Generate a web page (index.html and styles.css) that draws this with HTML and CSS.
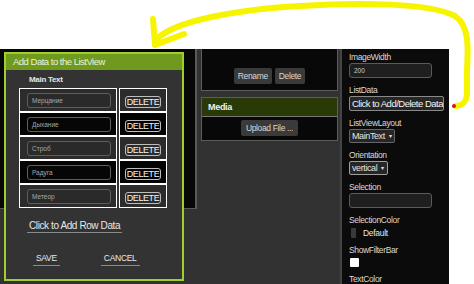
FILE: index.html
```html
<!DOCTYPE html>
<html>
<head>
<meta charset="utf-8">
<link rel="stylesheet" href="styles.css">
</head>
<body>
<div class="screen">
  <div class="topband"></div>
  <div class="app">
    <div class="viewer"><div class="viewer-panel"></div></div>
    <div class="middle">
      <div class="panel panel-top">
        <div class="btn-row"><span class="btn">Rename</span><span class="btn">Delete</span></div>
      </div>
      <div class="panel panel-media">
        <div class="panel-head">Media</div>
        <div class="panel-body"><span class="btn btn-upload">Upload File ...</span></div>
      </div>
    </div>
    <div class="props">
      <div class="prop">
        <div class="prop-label">ImageWidth</div>
        <div class="field">200</div>
      </div>
      <div class="prop">
        <div class="prop-label">ListData</div>
        <div class="prop-btn">Click to Add/Delete Data</div>
      </div>
      <div class="prop">
        <div class="prop-label">ListViewLayout</div>
        <div class="select">MainText<span class="caret">▾</span></div>
      </div>
      <div class="prop">
        <div class="prop-label">Orientation</div>
        <div class="select select-light">vertical<span class="caret">▾</span></div>
      </div>
      <div class="prop">
        <div class="prop-label">Selection</div>
        <div class="field"></div>
      </div>
      <div class="prop">
        <div class="prop-label">SelectionColor</div>
        <div class="color-row"><span class="swatch"></span><span class="color-name">Default</span></div>
      </div>
      <div class="prop">
        <div class="prop-label">ShowFilterBar</div>
        <div class="checkbox"></div>
      </div>
      <div class="prop">
        <div class="prop-label">TextColor</div>
      </div>
    </div>
  </div>

  <div class="dialog">
    <div class="dlg-title">Add Data to the ListView</div>
    <div class="dlg-body">
      <div class="dlg-label">Main Text</div>
      <table class="rows">
        <tr class="row-a"><td class="cell-text"><div class="txt">Мерцание</div></td><td class="cell-btn"><span class="del">DELETE</span></td></tr>
        <tr class="row-b"><td class="cell-text"><div class="txt">Дыхание</div></td><td class="cell-btn"><span class="del">DELETE</span></td></tr>
        <tr class="row-a"><td class="cell-text"><div class="txt">Строб</div></td><td class="cell-btn"><span class="del">DELETE</span></td></tr>
        <tr class="row-b"><td class="cell-text"><div class="txt">Радуга</div></td><td class="cell-btn"><span class="del">DELETE</span></td></tr>
        <tr class="row-a"><td class="cell-text"><div class="txt">Метеор</div></td><td class="cell-btn"><span class="del">DELETE</span></td></tr>
      </table>
      <div class="add-row"><span class="link link-add">Click to Add Row Data</span></div>
      <div class="actions"><span class="link">SAVE</span><span class="link">CANCEL</span></div>
    </div>
  </div>

  <svg class="annot" width="474" height="284" viewBox="0 0 474 284">
    <path d="M158 38 C 175 22, 230 10, 300 6 C 360 2, 430 3, 455 16 C 470 26, 468 50, 467 70 L 467 92 C 467 102, 463 105, 456 106" fill="none" stroke="#f7f400" stroke-width="6" stroke-linecap="round"/>
    <path d="M153 19 L 155 45 L 184 34" fill="none" stroke="#f7f400" stroke-width="6" stroke-linecap="round" stroke-linejoin="round"/>
    <circle cx="454" cy="106" r="2" fill="#e0101a"/>
  </svg>
</div>
</body>
</html>
```

FILE: styles.css
```css
* { box-sizing: border-box; }
html, body { margin: 0; padding: 0; }
body {
  width: 474px;
  height: 284px;
  overflow: hidden;
  background: #ffffff;
  font-family: "Liberation Sans", Arial, sans-serif;
}
.screen {
  position: relative;
  width: 474px;
  height: 284px;
}
.topband { height: 49px; }
.app {
  display: flex;
  width: 449px;
  height: 235px;
  background: #323232;
}
.viewer { width: 197px; }
.viewer-panel {
  height: 160px;
  background: #070707;
  border-right: 2px solid #5a5a5a;
  border-bottom: 1px solid #5a5a5a;
}
.middle {
  width: 143px;
  padding: 0 2px 0 4px;
  display: flex;
  flex-direction: column;
  gap: 6px;
}
.panel {
  background: #080808;
  border: 1px solid #5c5c5c;
}
.panel-top {
  height: 42px;
  border-top: none;
  display: flex;
  align-items: flex-end;
  justify-content: center;
  padding-bottom: 6px;
}
.btn-row { display: flex; gap: 3px; }
.btn {
  display: inline-block;
  height: 16px;
  line-height: 16px;
  padding: 0 4px;
  background: #3a3a3a;
  border-radius: 2px;
  color: #d8d8d8;
  font-size: 8.5px;
  letter-spacing: -0.35px;
}
.panel-media { height: 44px; }
.panel-head {
  height: 19px;
  line-height: 18px;
  padding-left: 6px;
  background: #2a3a07;
  border-bottom: 1px solid #777;
  color: #f0f0f0;
  font-weight: bold;
  font-size: 9px;
  letter-spacing: -0.3px;
}
.panel-body {
  display: flex;
  justify-content: center;
  padding-top: 3px;
}
.btn-upload { padding: 0 5px; }

.props {
  width: 109px;
  background: #0b0b0b;
  border-left: 2px solid #444;
  padding: 3px 0 0 7px;
  display: flex;
  flex-direction: column;
  gap: 7px;
}
.prop {
  display: flex;
  flex-direction: column;
  align-items: flex-start;
}
.prop-label {
  height: 10px;
  line-height: 10px;
  margin-bottom: 1px;
  color: #dadada;
  font-size: 8.5px;
  letter-spacing: -0.35px;
  white-space: nowrap;
}
.field {
  width: 83px;
  height: 15px;
  line-height: 14px;
  padding-left: 4px;
  background: #1f1f1f;
  border: 1px solid #5a5a5a;
  border-radius: 3px;
  color: #cccccc;
  font-size: 6.5px;
}
.prop-btn {
  width: 95px;
  height: 15px;
  line-height: 13px;
  padding-left: 2px;
  background: #262626;
  border: 1px solid #8a8a8a;
  border-radius: 2px;
  color: #f4f4f4;
  font-size: 9.5px;
  letter-spacing: -0.5px;
  white-space: nowrap;
}
.select {
  height: 14px;
  line-height: 12px;
  padding: 0 3px 0 2px;
  background: #262626;
  border: 1px solid #666;
  border-radius: 2px;
  color: #e4e4e4;
  font-size: 9px;
  letter-spacing: -0.4px;
  white-space: nowrap;
}
.select-light { border-color: #a0a0a0; }
.caret { margin-left: 4px; font-size: 6px; vertical-align: 1px; }
.color-row {
  display: flex;
  align-items: center;
  height: 11px;
  margin-top: 1px;
  padding-left: 2px;
}
.swatch {
  width: 5px;
  height: 10px;
  background: #3a3a3a;
  border-radius: 1px;
}
.color-name {
  margin-left: 7px;
  color: #e4e4e4;
  font-size: 8.5px;
  letter-spacing: -0.3px;
}
.checkbox {
  width: 9px;
  height: 9px;
  margin: 2px 0 0 1px;
  background: #ffffff;
  border-radius: 1px;
}

.dialog {
  position: absolute;
  left: 4px;
  top: 52px;
  width: 180px;
  height: 229px;
  background: #333333;
  border: 2px solid #9fcf2a;
}
.dlg-title {
  height: 16px;
  line-height: 16px;
  padding-left: 7px;
  background: #6f9a1f;
  color: #eaf2dc;
  font-size: 9.5px;
  letter-spacing: -0.5px;
}
.dlg-body { padding-top: 5px; }
.dlg-label {
  height: 10px;
  line-height: 10px;
  padding-left: 23px;
  color: #e6e6e6;
  font-weight: bold;
  font-size: 8px;
  letter-spacing: -0.3px;
}
.rows {
  margin: 3px 0 0 11px;
  border-collapse: separate;
  border-spacing: 2px 0;
}
.rows td {
  height: 24px;
  padding: 0;
  border: 1px solid #ffffff;
}
.row-a td { background: #2c2c2c; }
.row-b td { background: #030303; }
.cell-text { width: 98px; padding-left: 7px !important; }
.cell-btn { width: 48px; text-align: center; }
.txt {
  width: 84px;
  height: 15px;
  line-height: 14px;
  padding-left: 4px;
  border: 1px solid #5e5e5e;
  border-radius: 3px;
  color: #a8a8a8;
  font-size: 6.5px;
}
.row-a .txt { background: #2a2a2a; }
.row-b .txt { background: #060606; }
.del {
  display: inline-block;
  height: 12px;
  line-height: 10px;
  padding: 0 1px;
  border: 1px solid #bdbdbd;
  border-radius: 3px;
  color: #f4f4f4;
  font-size: 9px;
  letter-spacing: -0.4px;
}
.add-row {
  display: flex;
  margin: 12px 0 0 21px;
}
.link {
  display: block;
  line-height: 11px;
  padding: 0 3px 1px;
  border-bottom: 1px solid #8a8a8a;
  color: #e8e8e8;
  font-size: 8.5px;
  letter-spacing: -0.3px;
}
.link-add {
  padding: 0 2px 1px;
  font-size: 10px;
  letter-spacing: -0.4px;
}
.actions {
  display: flex;
  gap: 41px;
  margin: 20px 0 0 27px;
}
.annot {
  position: absolute;
  left: 0;
  top: 0;
  pointer-events: none;
}
```
